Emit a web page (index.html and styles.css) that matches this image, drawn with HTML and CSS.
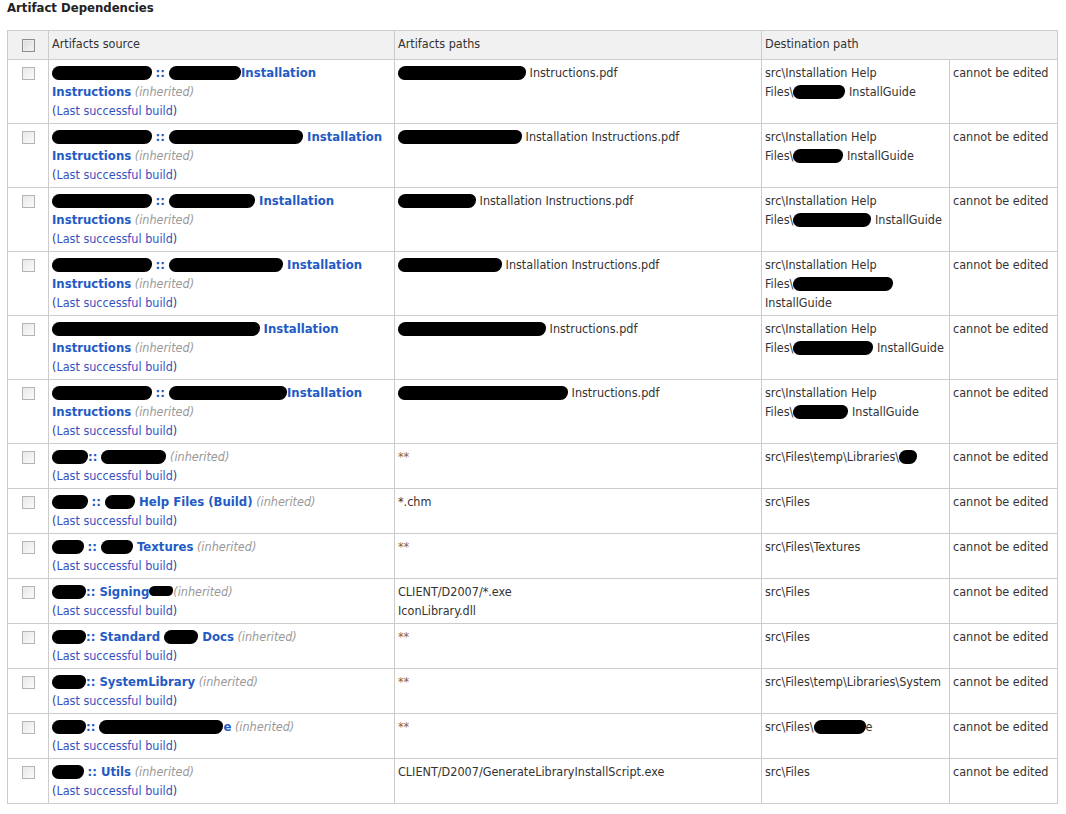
FILE: index.html
```html
<!DOCTYPE html>
<html lang="en">

<head>
    <meta charset="UTF-8">
    <title>Artifact Dependencies</title>
    <link rel="stylesheet" href="styles.css">
</head>

<body>
    <h2 class="title">Artifact Dependencies</h2>

    <table class="deps">
        <colgroup>
            <col class="c-check">
            <col class="c-source">
            <col class="c-paths">
            <col class="c-dest">
            <col class="c-edit">
        </colgroup>
        <thead>
            <tr>
                <th class="check"><span class="box box-head"></span></th>
                <th>Artifacts source</th>
                <th>Artifacts paths</th>
                <th colspan="2">Destination path</th>
            </tr>
        </thead>
        <tbody>
            <!-- Installation instructions -->
            <tr>
                <td class="check"><span class="box"></span></td>
                <td>
                    <span class="blob w100"></span> <a class="proj">:: <span class="blob w72"></span>Installation<br>Instructions</a> <span class="inh">(inherited)</span><br>
                    <span class="par">(</span><a class="build">Last successful build</a><span class="par">)</span>
                </td>
                <td><span class="blob w128"></span> Instructions.pdf</td>
                <td>src\Installation Help<br>Files\<span class="blob w52"></span> InstallGuide</td>
                <td>cannot be edited</td>
            </tr>
            <tr>
                <td class="check"><span class="box"></span></td>
                <td>
                    <span class="blob w100"></span> <a class="proj">:: <span class="blob w134"></span> Installation<br>Instructions</a> <span class="inh">(inherited)</span><br>
                    <span class="par">(</span><a class="build">Last successful build</a><span class="par">)</span>
                </td>
                <td><span class="blob w124"></span> Installation Instructions.pdf</td>
                <td>src\Installation Help<br>Files\<span class="blob w50"></span> InstallGuide</td>
                <td>cannot be edited</td>
            </tr>
            <tr>
                <td class="check"><span class="box"></span></td>
                <td>
                    <span class="blob w100"></span> <a class="proj">:: <span class="blob w86"></span> Installation<br>Instructions</a> <span class="inh">(inherited)</span><br>
                    <span class="par">(</span><a class="build">Last successful build</a><span class="par">)</span>
                </td>
                <td><span class="blob w78"></span> Installation Instructions.pdf</td>
                <td>src\Installation Help<br>Files\<span class="blob w78"></span> InstallGuide</td>
                <td>cannot be edited</td>
            </tr>
            <tr>
                <td class="check"><span class="box"></span></td>
                <td>
                    <span class="blob w100"></span> <a class="proj">:: <span class="blob w114"></span> Installation<br>Instructions</a> <span class="inh">(inherited)</span><br>
                    <span class="par">(</span><a class="build">Last successful build</a><span class="par">)</span>
                </td>
                <td><span class="blob w104"></span> Installation Instructions.pdf</td>
                <td>src\Installation Help<br>Files\<span class="blob w100"></span><br>InstallGuide</td>
                <td>cannot be edited</td>
            </tr>
            <tr>
                <td class="check"><span class="box"></span></td>
                <td>
                    <span class="blob w208"></span> <a class="proj">Installation<br>Instructions</a> <span class="inh">(inherited)</span><br>
                    <span class="par">(</span><a class="build">Last successful build</a><span class="par">)</span>
                </td>
                <td><span class="blob w148"></span> Instructions.pdf</td>
                <td>src\Installation Help<br>Files\<span class="blob w80"></span> InstallGuide</td>
                <td>cannot be edited</td>
            </tr>
            <tr>
                <td class="check"><span class="box"></span></td>
                <td>
                    <span class="blob w100"></span> <a class="proj">:: <span class="blob w118"></span>Installation<br>Instructions</a> <span class="inh">(inherited)</span><br>
                    <span class="par">(</span><a class="build">Last successful build</a><span class="par">)</span>
                </td>
                <td><span class="blob w170"></span> Instructions.pdf</td>
                <td>src\Installation Help<br>Files\<span class="blob w55"></span> InstallGuide</td>
                <td>cannot be edited</td>
            </tr>

            <!-- Libraries and help files -->
            <tr>
                <td class="check"><span class="box"></span></td>
                <td>
                    <span class="blob w36"></span><a class="proj">:: <span class="blob w65"></span></a> <span class="inh">(inherited)</span><br>
                    <span class="par">(</span><a class="build">Last successful build</a><span class="par">)</span>
                </td>
                <td><span class="mask">**</span></td>
                <td>src\Files\temp\Libraries\<span class="blob w18"></span></td>
                <td>cannot be edited</td>
            </tr>
            <tr>
                <td class="check"><span class="box"></span></td>
                <td>
                    <span class="blob w36"></span> <a class="proj">:: <span class="blob w30"></span> Help Files (Build)</a> <span class="inh">(inherited)</span><br>
                    <span class="par">(</span><a class="build">Last successful build</a><span class="par">)</span>
                </td>
                <td>*.chm</td>
                <td>src\Files</td>
                <td>cannot be edited</td>
            </tr>
            <tr>
                <td class="check"><span class="box"></span></td>
                <td>
                    <span class="blob w32"></span> <a class="proj">:: <span class="blob w32"></span> Textures</a> <span class="inh">(inherited)</span><br>
                    <span class="par">(</span><a class="build">Last successful build</a><span class="par">)</span>
                </td>
                <td><span class="mask">**</span></td>
                <td>src\Files\Textures</td>
                <td>cannot be edited</td>
            </tr>
            <tr>
                <td class="check"><span class="box"></span></td>
                <td>
                    <span class="blob w34"></span><a class="proj">:: Signing<span class="blob w24 tuck"></span></a><span class="inh">(inherited)</span><br>
                    <span class="par">(</span><a class="build">Last successful build</a><span class="par">)</span>
                </td>
                <td>CLIENT/D2007/*.exe<br>IconLibrary.dll</td>
                <td>src\Files</td>
                <td>cannot be edited</td>
            </tr>
            <tr>
                <td class="check"><span class="box"></span></td>
                <td>
                    <span class="blob w34"></span><a class="proj">:: Standard <span class="blob w34"></span> Docs</a> <span class="inh">(inherited)</span><br>
                    <span class="par">(</span><a class="build">Last successful build</a><span class="par">)</span>
                </td>
                <td><span class="mask">**</span></td>
                <td>src\Files</td>
                <td>cannot be edited</td>
            </tr>
            <tr>
                <td class="check"><span class="box"></span></td>
                <td>
                    <span class="blob w34"></span><a class="proj">:: SystemLibrary</a> <span class="inh">(inherited)</span><br>
                    <span class="par">(</span><a class="build">Last successful build</a><span class="par">)</span>
                </td>
                <td><span class="mask">**</span></td>
                <td>src\Files\temp\Libraries\System</td>
                <td>cannot be edited</td>
            </tr>
            <tr>
                <td class="check"><span class="box"></span></td>
                <td>
                    <span class="blob w34"></span><a class="proj">:: <span class="blob w124"></span>e</a> <span class="inh">(inherited)</span><br>
                    <span class="par">(</span><a class="build">Last successful build</a><span class="par">)</span>
                </td>
                <td><span class="mask">**</span></td>
                <td>src\Files\<span class="blob w52"></span>e</td>
                <td>cannot be edited</td>
            </tr>
            <tr>
                <td class="check"><span class="box"></span></td>
                <td>
                    <span class="blob w32"></span> <a class="proj">:: Utils</a> <span class="inh">(inherited)</span><br>
                    <span class="par">(</span><a class="build">Last successful build</a><span class="par">)</span>
                </td>
                <td>CLIENT/D2007/GenerateLibraryInstallScript.exe</td>
                <td>src\Files</td>
                <td>cannot be edited</td>
            </tr>
        </tbody>
    </table>
</body>

</html>
```

FILE: styles.css
```css
body {
    font-family: "DejaVu Sans Condensed", "DejaVu Sans", sans-serif;
    font-stretch: condensed;
    font-size: 12.5px;
    color: #333;
    background-color: white;
    margin: 0;
    padding: 0 7px;
}

.title {
    font-size: 13px;
    line-height: 16px;
    margin: 0 0 14px;
    color: #222;
}

.deps {
    width: 1050px;
    table-layout: fixed;
    border-collapse: collapse;
}

.c-check {
    width: 41px;
}

.c-source {
    width: 346px;
}

.c-paths {
    width: 367px;
}

.c-dest {
    width: 188px;
}

.c-edit {
    width: 108px;
}

.deps th,
.deps td {
    border: 1px solid #cccccc;
    padding: 3px 3px;
    line-height: 19px;
    text-align: left;
    vertical-align: top;
    white-space: nowrap;
    overflow: hidden;
}

.deps th {
    background-color: #f1f1f1;
    font-weight: normal;
    padding: 3px 3px 6px;
}

.deps .check {
    text-align: center;
    padding-top: 7px;
}

.deps th.check {
    padding-top: 8px;
}

.box {
    display: block;
    width: 11px;
    height: 11px;
    margin: 0 auto;
    border: 1px solid #b5b5b5;
    background: linear-gradient(135deg, #e8e8e8, #fbfbfb);
}

.box-head {
    border-color: #8e8e8e;
    background: linear-gradient(135deg, #d9d9d9, #f6f6f6);
    box-shadow: inset 0 0 0 1px #ececec;
}

a {
    text-decoration: none;
    cursor: pointer;
}

.proj {
    color: #1f5bc4;
    font-weight: bold;
    font-size: 13px;
}

.build {
    color: #3552c0;
}

.par {
    color: #3b3b80;
}

.inh {
    color: #999;
    font-style: italic;
}

.mask {
    color: #8a6446;
}

/* redacted parts of the original screenshot */
.blob {
    display: inline-block;
    height: 14px;
    vertical-align: -3px;
    background-color: black;
    border-radius: 8px 6px 8px 7px;
}

.tuck {
    height: 10px;
    vertical-align: 0;
}

.w18 { width: 18px; }
.w24 { width: 24px; }
.w30 { width: 30px; }
.w32 { width: 32px; }
.w34 { width: 34px; }
.w36 { width: 36px; }
.w50 { width: 50px; }
.w52 { width: 52px; }
.w55 { width: 55px; }
.w65 { width: 65px; }
.w72 { width: 72px; }
.w78 { width: 78px; }
.w80 { width: 80px; }
.w86 { width: 86px; }
.w100 { width: 100px; }
.w104 { width: 104px; }
.w114 { width: 114px; }
.w118 { width: 118px; }
.w124 { width: 124px; }
.w128 { width: 128px; }
.w134 { width: 134px; }
.w148 { width: 148px; }
.w170 { width: 170px; }
.w208 { width: 208px; }
```
